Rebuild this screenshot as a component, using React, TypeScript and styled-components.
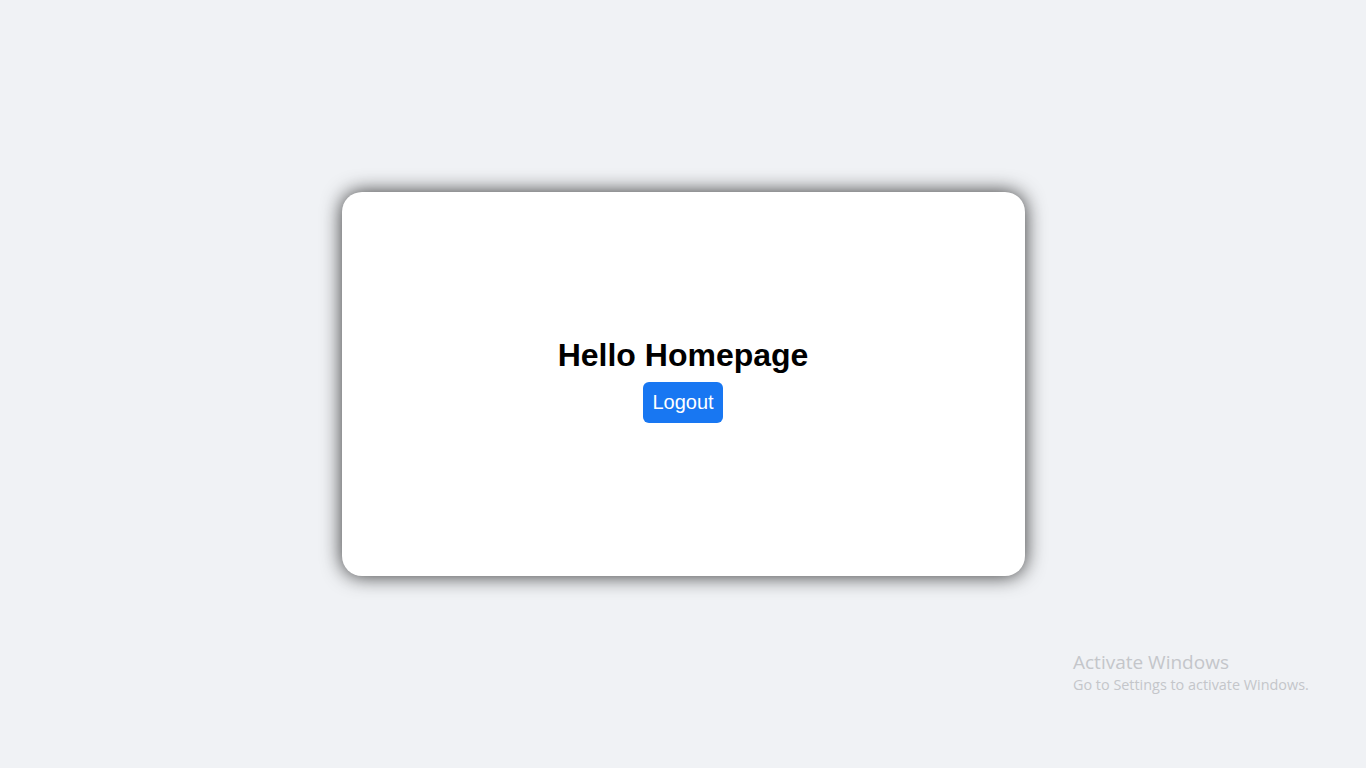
import React from 'react';
import styled, { createGlobalStyle } from 'styled-components';

const GlobalStyle = createGlobalStyle`
  html, body {
    margin: 0;
    padding: 0;
    background-color: #f0f2f5;
    font-family: Arial, "Liberation Sans", sans-serif;
  }
`;

const Page = styled.div`
  width: 100vw;
  height: 100vh;
  display: flex;
  align-items: center;
  justify-content: center;
  background-color: #f0f2f5;
  position: relative;
  overflow: hidden;
`;

const Card = styled.div`
  box-sizing: border-box;
  width: 50%;
  height: 50%;
  padding-bottom: 8px;
  background-color: #fff;
  border-radius: 20px;
  box-shadow: 0 0 20px rgba(0, 0, 0, 0.8);
  display: flex;
  flex-direction: column;
  align-items: center;
  justify-content: center;
  gap: 8px;
`;

const Title = styled.h1`
  margin: 0;
  font-size: 32px;
  font-weight: 700;
  color: #000;
`;

const LogoutButton = styled.button`
  background-color: #1877f2;
  color: #fff;
  border: none;
  border-radius: 6px;
  padding: 9px 9px;
  font-family: Arial, "Liberation Sans", sans-serif;
  font-size: 20px;
  cursor: pointer;
`;

const Watermark = styled.div`
  position: absolute;
  left: 1073px;
  top: 650px;
  color: #c4c6ca;
  font-family: "Open Sans", "Noto Sans", sans-serif;
`;

const WatermarkTitle = styled.div`
  font-size: 19px;
  line-height: 25px;
`;

const WatermarkText = styled.div`
  font-size: 14.4px;
  line-height: 20px;
`;

const App: React.FC = () => {
  return (
    <Page>
      <GlobalStyle />
      <Card>
        <Title>Hello Homepage</Title>
        <LogoutButton>Logout</LogoutButton>
      </Card>
      <Watermark>
        <WatermarkTitle>Activate Windows</WatermarkTitle>
        <WatermarkText>Go to Settings to activate Windows.</WatermarkText>
      </Watermark>
    </Page>
  );
};

export default App;
